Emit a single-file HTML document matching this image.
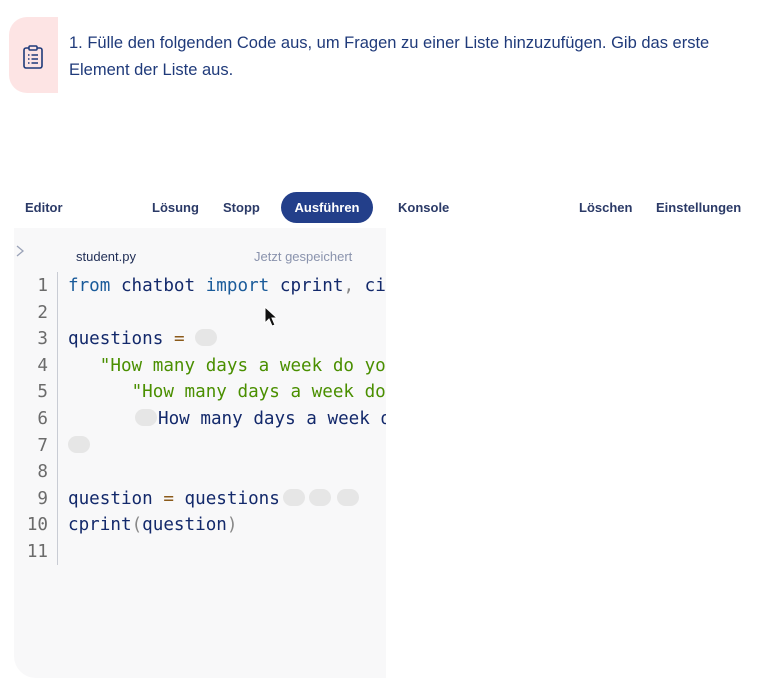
<!DOCTYPE html>
<html><head><meta charset="utf-8"><style>
body{margin:0;width:768px;height:693px;background:#fff;position:relative;overflow:hidden;font-family:"Liberation Sans",sans-serif;color:#1f3a7a}
.abs{position:absolute}
.tab{position:absolute;top:200px;font-size:13px;font-weight:bold;color:#2b3a67}
.code{position:absolute;left:0;top:273px;font-family:"DejaVu Sans Mono",monospace;font-size:17.6px;line-height:26.6px;white-space:pre}
.ln{position:absolute;left:14px;width:34px;text-align:right;color:#6b6b6b}
.tx{position:absolute;left:68px;color:#13296b}
.kw{color:#1a5b9a}.st{color:#4a8f00}.op{color:#8b5a1a}.pn{color:#888}
.blob{display:inline-block;width:22px;height:17px;border-radius:9px;background:#e6e6e6;vertical-align:-2px}
</style></head><body>
<div class="abs" style="left:9px;top:17px;width:49px;height:76px;background:#fde4e4;border-radius:18px 0 0 18px"></div>
<svg class="abs" style="left:22px;top:44px" width="22" height="26" viewBox="0 0 22 26"><rect x="2" y="4" width="18" height="20" rx="2" fill="none" stroke="#1f3a7a" stroke-width="1.6"/><rect x="7" y="2" width="8" height="4" rx="1" fill="#fde4e4" stroke="#1f3a7a" stroke-width="1.5"/><g stroke="#1f3a7a" stroke-width="1.5"><line x1="6" y1="11" x2="7.5" y2="11"/><line x1="9.5" y1="11" x2="16" y2="11"/><line x1="6" y1="15" x2="7.5" y2="15"/><line x1="9.5" y1="15" x2="16" y2="15"/><line x1="6" y1="19" x2="7.5" y2="19"/><line x1="9.5" y1="19" x2="16" y2="19"/></g></svg>
<div class="abs" style="left:69px;top:30px;font-size:16.5px;line-height:27px;color:#1f3a7a;width:672px">1. Fülle den folgenden Code aus, um Fragen zu einer Liste hinzuzufügen. Gib das erste Element der Liste aus.</div>

<div class="tab" style="left:25px">Editor</div>
<div class="tab" style="left:152px">Lösung</div>
<div class="tab" style="left:223px">Stopp</div>
<div class="abs" style="left:281px;top:192px;width:92px;height:31px;border-radius:16px;background:#233f8a;color:#fff;font-size:13px;font-weight:bold;text-align:center;line-height:31px">Ausführen</div>
<div class="tab" style="left:398px">Konsole</div>
<div class="tab" style="left:579px">Löschen</div>
<div class="tab" style="left:656px">Einstellungen</div>

<div class="abs" style="left:14px;top:228px;width:372px;height:450px;background:#f8f8f9;border-radius:0 0 0 22px"></div>
<svg class="abs" style="left:15px;top:244px" width="10" height="14"><path d="M2 2 L8 7 L2 12" fill="none" stroke="#9aa3b8" stroke-width="1.3"/></svg>
<div class="abs" style="left:76px;top:249px;font-size:13px;color:#1f2d55">student.py</div>
<div class="abs" style="left:254px;top:249px;font-size:13px;color:#8a93ad">Jetzt gespeichert</div>
<div class="abs" style="left:57px;top:272px;width:1px;height:293px;background:#c9ccd4"></div>
<div class="code">
<div class="ln" style="top:0">1</div><div class="ln" style="top:26.6px">2</div><div class="ln" style="top:53.2px">3</div><div class="ln" style="top:79.8px">4</div><div class="ln" style="top:106.4px">5</div><div class="ln" style="top:133px">6</div><div class="ln" style="top:159.6px">7</div><div class="ln" style="top:186.2px">8</div><div class="ln" style="top:212.8px">9</div><div class="ln" style="top:239.4px">10</div><div class="ln" style="top:266px">11</div>
<div class="abs" style="left:68px;top:0;width:318px;height:300px;overflow:hidden">
<div class="tx" style="left:0;top:0"><span class="kw">from</span> chatbot <span class="kw">import</span> cprint<span class="pn">,</span> ci</div>
<div class="tx" style="left:0;top:53.2px">questions <span class="op">=</span> <span class="blob"></span></div>
<div class="tx" style="left:0;top:79.8px">   <span class="st">"How many days a week do yo</span></div>
<div class="tx" style="left:0;top:106.4px">      <span class="st">"How many days a week do</span></div>
<div class="tx" style="left:0;top:133px"><span style="margin-left:67px" class="blob"></span><span style="margin-left:1px">How many days a week d</span></div>
<div class="tx" style="left:0;top:159.6px"><span class="blob"></span></div>
<div class="tx" style="left:0;top:212.8px">question <span class="op">=</span> questions<span class="blob" style="margin-left:3px"></span> <span class="blob" style="margin-left:-6px"></span> <span class="blob" style="margin-left:-5px"></span></div>
<div class="tx" style="left:0;top:239.4px">cprint<span class="pn">(</span>question<span class="pn">)</span></div>
</div></div>
<svg class="abs" style="left:264px;top:306px" width="16" height="24"><path d="M1 1 L1 17 L5 13 L8 20 L11 19 L8 12 L13 12 Z" fill="#111" stroke="#fff" stroke-width="1"/></svg>
</body></html>
